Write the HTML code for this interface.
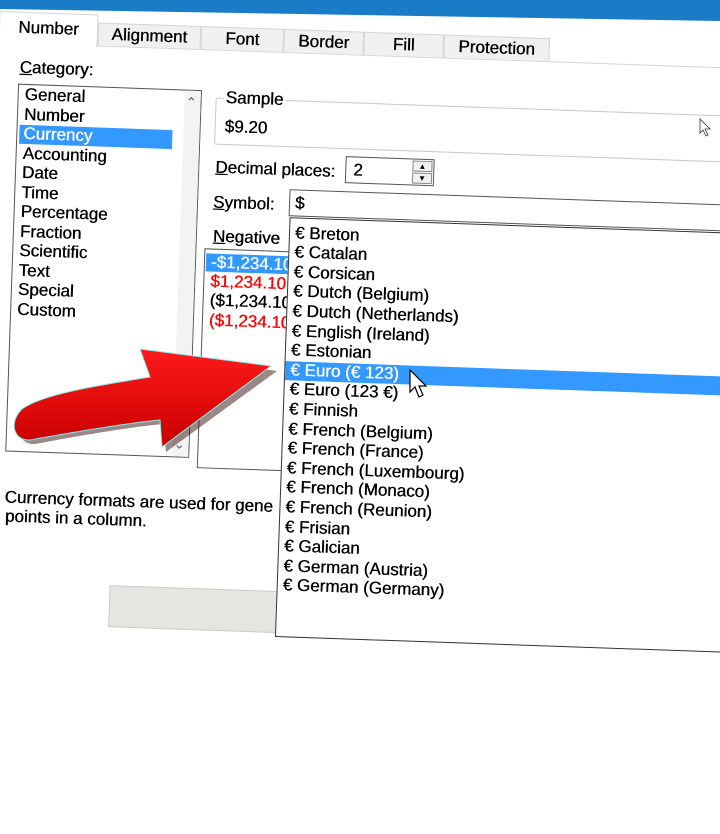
<!DOCTYPE html>
<html><head><meta charset="utf-8"><style>
html,body{margin:0;padding:0;width:720px;height:598px;overflow:hidden;background:#fff;font-family:"Liberation Sans",sans-serif;}
#r{position:absolute;left:0;top:0;width:1000px;height:800px;transform:rotate(2deg);transform-origin:0 0;}
.a{position:absolute;white-space:nowrap;font-size:17px;line-height:20px;color:#000;text-shadow:0.4px 0 0 currentColor;}
.tab{position:absolute;top:19px;height:23px;background:#f0f0f0;border:1px solid #d5d5d5;border-bottom:none;box-sizing:border-box;font-size:17px;line-height:22px;text-align:center;text-shadow:0.4px 0 0 #000;}
.dd{position:absolute;left:303px;top:212.7px;font-size:17px;line-height:19.6px;text-shadow:0.4px 0 0 currentColor;white-space:nowrap}
</style></head><body>
<div id="r">
  <div style="position:absolute;left:0;top:42px;width:1000px;height:1px;background:#d5d5d5"></div>
  <div class="tab" style="left:0;top:11px;width:99px;height:33px;background:#fff;line-height:30px">Number</div>
  <div class="tab" style="left:99px;width:103px">Alignment</div>
  <div class="tab" style="left:202px;width:83px">Font</div>
  <div class="tab" style="left:285px;width:80px">Border</div>
  <div class="tab" style="left:365px;width:80px">Fill</div>
  <div class="tab" style="left:445px;width:106px">Protection</div>

  <div class="a" style="left:22px;top:57px"><u>C</u>ategory:</div>
  <div style="position:absolute;left:21px;top:83px;width:184px;height:368px;border:1px solid #555;box-sizing:border-box;"></div>
  <div style="position:absolute;left:188px;top:84px;width:16px;height:366px;background:#f3f3f3"></div>
  <div class="a" style="left:189px;top:86px;font-size:13px;color:#777">&#8963;</div>
  <div class="a" style="left:189px;top:428px;font-size:13px;color:#777">&#8964;</div>
  <div style="position:absolute;left:24px;top:124px;width:153px;height:19px;background:#3399ff"></div>
  <div class="a" style="left:28px;top:84px">General</div>
  <div class="a" style="left:28px;top:103.5px">Number</div>
  <div class="a" style="left:28px;top:123px;color:#fff">Currency</div>
  <div class="a" style="left:28px;top:142.5px">Accounting</div>
  <div class="a" style="left:28px;top:162px">Date</div>
  <div class="a" style="left:28px;top:181.5px">Time</div>
  <div class="a" style="left:28px;top:201px">Percentage</div>
  <div class="a" style="left:28px;top:220.5px">Fraction</div>
  <div class="a" style="left:28px;top:240px">Scientific</div>
  <div class="a" style="left:28px;top:259.5px">Text</div>
  <div class="a" style="left:28px;top:279px">Special</div>
  <div class="a" style="left:28px;top:298.5px">Custom</div>

  <div style="position:absolute;left:219px;top:90px;width:700px;height:45px;border:1px solid #c8c8c8;border-radius:2px"></div>
  <div class="a" style="left:227px;top:80px;background:#fff;padding:0 2px">Sample</div>
  <div class="a" style="left:229px;top:109px">$9.20</div>

  <div class="a" style="left:221px;top:150px"><u>D</u>ecimal places:</div>
  <div style="position:absolute;left:351px;top:144px;width:89px;height:27px;border:1px solid #555;box-sizing:border-box"></div>
  <div class="a" style="left:359px;top:148px">2</div>
  <div style="position:absolute;left:418px;top:146px;width:20px;height:11px;border:1px solid #888;background:#f0f0f0;box-sizing:border-box;font-size:8px;line-height:9px;text-align:center">&#9650;</div>
  <div style="position:absolute;left:418px;top:158px;width:20px;height:11px;border:1px solid #888;background:#f0f0f0;box-sizing:border-box;font-size:8px;line-height:9px;text-align:center">&#9660;</div>

  <div class="a" style="left:220px;top:184.5px"><u>S</u>ymbol:</div>
  <div style="position:absolute;left:296px;top:179px;width:700px;height:27px;border:1px solid #555;box-sizing:border-box"></div>
  <div class="a" style="left:302px;top:183px">$</div>

  <div class="a" style="left:221px;top:218.5px"><u>N</u>egative</div>
  <div style="position:absolute;left:213px;top:241px;width:120px;height:220px;border:1px solid #555;box-sizing:border-box"></div>
  <div style="position:absolute;left:215px;top:246px;width:90px;height:18px;background:#3399ff"></div>
  <div class="a" style="left:220px;top:244.5px;color:#fff">-$1,234.10</div>
  <div class="a" style="left:220px;top:263.5px;color:#f00">$1,234.10</div>
  <div class="a" style="left:220px;top:282.5px">($1,234.10)</div>
  <div class="a" style="left:220px;top:302.5px;color:#f00">($1,234.10)</div>

  <div class="a" style="left:22px;top:487px">Currency formats are used for gene</div>
  <div class="a" style="left:23px;top:506px">points in a column.</div>

  <div style="position:absolute;left:130px;top:581px;width:560px;height:40px;background:#e6e6e0;border:1px solid #ccc"></div>

  <div style="position:absolute;left:297px;top:207px;width:700px;height:420px;border:1px solid #333;background:#fff;box-sizing:border-box"></div>
  <div style="position:absolute;left:298px;top:351px;width:700px;height:19px;background:#3399ff"></div>
  <div class="dd">
    <div>€ Breton</div><div>€ Catalan</div><div>€ Corsican</div><div>€ Dutch (Belgium)</div><div>€ Dutch (Netherlands)</div><div>€ English (Ireland)</div><div>€ Estonian</div><div style="color:#fff">€ Euro (€ 123)</div><div>€ Euro (123 €)</div><div>€ Finnish</div><div>€ French (Belgium)</div><div>€ French (France)</div><div>€ French (Luxembourg)</div><div>€ French (Monaco)</div><div>€ French (Reunion)</div><div>€ Frisian</div><div>€ Galician</div><div>€ German (Austria)</div><div>€ German (Germany)</div>
  </div>
</div>

<svg width="720" height="598" style="position:absolute;left:0;top:0">
  <polygon points="0,0 720,0 720,21 0,9" fill="#1a7cc6"/>
  <defs><linearGradient id="g" x1="0" y1="0" x2="0" y2="1"><stop offset="0" stop-color="#ff1a1a"/><stop offset="1" stop-color="#c80000"/></linearGradient></defs>
  <path d="M274 368 L140 349 L151 378 C105 386 45 394 24 410 C10 424 16 442 32 441 C80 432 128 424 160 421 L163 449 Z" fill="#3a1010" opacity="0.5" transform="translate(3,3)"/>
  <path d="M271 366 L140 349 L150 377 C100 385 42 394 22 409 C8 423 14 441 30 440 C80 431 128 423 160 420 L162 447 Z" fill="url(#g)" stroke="#8ee" stroke-width="1"/>
  <path d="M410 370 L410 392 L415 387 L419 397 L423 395 L419 386 L426 386 Z" fill="#fff" stroke="#000" stroke-width="1.2"/>
  <path d="M700 119 L700 133 L703 130 L706 136 L708 135 L705 129 L710 129 Z" fill="#fff" stroke="#333" stroke-width="0.8"/>
</svg>
</body></html>
